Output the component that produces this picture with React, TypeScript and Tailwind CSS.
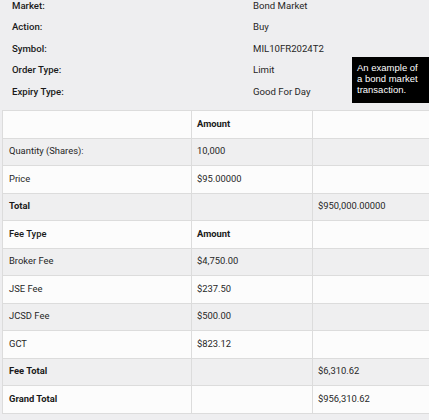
import React from "react";

const info: [string, string][] = [
  ["Market:", "Bond Market"],
  ["Action:", "Buy"],
  ["Symbol:", "MIL10FR2024T2"],
  ["Order Type:", "Limit"],
  ["Expiry Type:", "Good For Day"],
];

type Row = { a: string; b: string; c: string; bold?: boolean; head?: boolean };

const rows: Row[] = [
  { a: "", b: "Amount", c: "", head: true },
  { a: "Quantity (Shares):", b: "10,000", c: "" },
  { a: "Price", b: "$95.00000", c: "" },
  { a: "Total", b: "", c: "$950,000.00000", bold: true },
  { a: "Fee Type", b: "Amount", c: "", head: true },
  { a: "Broker Fee", b: "$4,750.00", c: "" },
  { a: "JSE Fee", b: "$237.50", c: "" },
  { a: "JCSD Fee", b: "$500.00", c: "" },
  { a: "GCT", b: "$823.12", c: "" },
  { a: "Fee Total", b: "", c: "$6,310.62", bold: true },
  { a: "Grand Total", b: "", c: "$956,310.62", bold: true },
];

export default function App() {
  return (
    <div
      className="relative w-[429px] h-[420px] overflow-hidden bg-[#eeeef0] text-[#1e1e1e]"
      style={{ fontFamily: 'Roboto, "Liberation Sans", Arial, sans-serif' }}
    >
      <div className="flex flex-col -mt-[5px] pl-[12px]">
        {info.map(([l, v]) => (
          <div key={l} className="flex h-[21.5px] items-center text-[9.6px]">
            <span className="w-[241px] font-medium text-[#1a1a1a]">{l}</span>
            <span className="text-[#262626]">{v}</span>
          </div>
        ))}
      </div>

      <div
        className="absolute left-[352px] top-[57px] w-[77px] h-[46px] bg-black text-white text-[9.5px] leading-[11px] pl-[5px] pt-[5px]"
        style={{ fontFamily: '"Liberation Sans", Arial, sans-serif' }}
      >
        An example of
        <br />a bond market
        <br />
        transaction.
      </div>

      <div className="mt-[7px] ml-[2px] w-[440px] border-t border-l border-[#dcdcdc]">
        {rows.map((r, i) => (
          <div
            key={i}
            className={`flex border-b border-[#dcdcdc] ${i % 2 === 0 ? "h-[28px] bg-[#fcfcfc]" : "h-[27px] bg-[#efeff0]"} text-[9.4px]`}
          >
            <div
              className={`w-[189px] border-r border-[#dcdcdc] flex items-center pl-[6px] ${r.bold ? "font-bold text-[#1a1a1a]" : r.head ? "font-medium text-[#1a1a1a]" : "text-[#262626]"}`}
            >
              {r.a}
            </div>
            <div
              className={`w-[121px] border-r border-[#dcdcdc] flex items-center pl-[5px] ${r.head ? "font-bold text-[#1a1a1a]" : "text-[#262626]"}`}
            >
              {r.b}
            </div>
            <div className="flex-1 flex items-center pl-[5px] text-[#262626]">{r.c}</div>
          </div>
        ))}
      </div>
    </div>
  );
}
